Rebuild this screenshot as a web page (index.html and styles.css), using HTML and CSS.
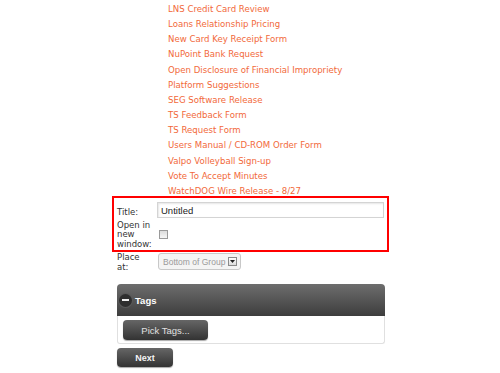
FILE: index.html
```html
<!DOCTYPE html>
<html>
<head>
<meta charset="utf-8">
<link rel="stylesheet" href="styles.css">
</head>
<body>
<div class="page">
  <div class="links">
    <a class="link" href="#">LNS Credit Card Review</a>
    <a class="link" href="#">Loans Relationship Pricing</a>
    <a class="link" href="#">New Card Key Receipt Form</a>
    <a class="link" href="#">NuPoint Bank Request</a>
    <a class="link" href="#">Open Disclosure of Financial Impropriety</a>
    <a class="link" href="#">Platform Suggestions</a>
    <a class="link" href="#">SEG Software Release</a>
    <a class="link" href="#">TS Feedback Form</a>
    <a class="link" href="#">TS Request Form</a>
    <a class="link" href="#">Users Manual / CD-ROM Order Form</a>
    <a class="link" href="#">Valpo Volleyball Sign-up</a>
    <a class="link" href="#">Vote To Accept Minutes</a>
    <a class="link" href="#">WatchDOG Wire Release - 8/27</a>
  </div>
  <div class="highlight">
    <div class="row row-title">
      <label class="lbl">Title:</label>
      <input class="text" type="text" value="Untitled">
    </div>
    <div class="row row-check">
      <label class="lbl">Open in<br>new<br>window:</label>
      <span class="check"></span>
    </div>
  </div>
  <div class="row row-place">
    <label class="lbl">Place<br>at:</label>
    <div class="select"><span class="select-text">Bottom of Group</span><span class="select-btn"><svg width="5" height="3" viewBox="0 0 5 3"><path d="M0 0H5L2.5 3Z" fill="#222"/></svg></span></div>
  </div>
  <div class="panel">
    <div class="panel-head">
      <span class="minus"><span class="bar"></span></span>
      <span class="panel-title">Tags</span>
    </div>
    <div class="panel-body">
      <button class="btn btn-pick">Pick Tags...</button>
    </div>
  </div>
  <button class="btn btn-next">Next</button>
</div>
</body>
</html>
```
FILE: styles.css
```css
html, body {
  margin: 0;
  padding: 0;
  background: #ffffff;
}
.page {
  width: 500px;
  height: 373px;
  overflow: hidden;
  font-family: "DejaVu Sans", Verdana, sans-serif;
}
.links {
  display: flex;
  flex-direction: column;
  padding: 2px 0 0 168px;
}
.link {
  display: block;
  font-size: 8.6px;
  line-height: 15.17px;
  height: 15.17px;
  color: #f2693a;
  text-decoration: none;
  white-space: nowrap;
}
.highlight {
  margin: -3px 0 0 112px;
  height: 52px;
  border: 2px solid #ff0000;
  padding: 0 0 0 3px;
  box-sizing: content-box;
  width: 270px;
}
.row {
  display: grid;
  grid-template-columns: 40px 1fr;
  align-items: end;
}
.lbl {
  font-size: 8.5px;
  line-height: 9.5px;
  color: #333333;
}
.row-title {
  padding-top: 2px;
  height: 18px;
}
.row-title .lbl {
  padding-bottom: 1px;
}
.text {
  width: 227px;
  height: 16px;
  box-sizing: border-box;
  border: 1px solid #d4d4d4;
  box-shadow: inset 1px 1px 2px #e6e6e6;
  font-family: "Liberation Sans", Arial, sans-serif;
  font-size: 9.5px;
  color: #222222;
  padding: 0 0 0 3px;
  margin: 0;
  outline: none;
}
.row-check {
  height: 32px;
  align-items: center;
}
.row-check .lbl {
  padding-top: 2px;
}
.check {
  display: block;
  width: 9px;
  height: 9px;
  margin-left: 2px;
  margin-top: 1px;
  box-sizing: border-box;
  border: 1px solid #9a9a9a;
  background: linear-gradient(#dcdcdc, #f6f6f6);
}
.row-place {
  margin-left: 117px;
  height: 21px;
  align-items: start;
}
.row-place .lbl {
  padding-top: 1px;
}
.select {
  margin-left: 1px;
  margin-top: 1px;
  width: 83px;
  height: 17px;
  box-sizing: border-box;
  border: 1px solid #c8c8c8;
  border-radius: 3px;
  background: #f4f4f4;
  display: flex;
  align-items: center;
  justify-content: space-between;
  padding: 0 3px 0 4px;
}
.select-text {
  font-family: "Liberation Sans", Arial, sans-serif;
  font-size: 8.5px;
  color: #9a9a9a;
  white-space: nowrap;
}
.select-btn {
  width: 9px;
  height: 9px;
  box-sizing: border-box;
  border: 1px solid #8a8a8a;
  background: linear-gradient(#ffffff, #dcdcdc);
  display: flex;
  align-items: center;
  justify-content: center;
}
.panel {
  margin: 11px 0 0 117px;
  width: 268px;
}
.panel-head {
  height: 32px;
  border-radius: 4px 4px 0 0;
  background: linear-gradient(#6d6d6d, #3d3d3d);
  display: flex;
  align-items: center;
  padding-left: 2px;
  gap: 3px;
}
.minus {
  width: 13px;
  height: 13px;
  border-radius: 50%;
  background: #2e2e2e;
  box-shadow: 0 0 0 1px #5a5a5a;
  display: flex;
  align-items: center;
  justify-content: center;
}
.bar {
  width: 7px;
  height: 2px;
  background: #f0f0f0;
}
.panel-title {
  font-family: "Liberation Sans", Arial, sans-serif;
  font-size: 9.5px;
  font-weight: bold;
  color: #ffffff;
}
.panel-body {
  height: 28px;
  box-sizing: border-box;
  border: 1px solid #e0e0e0;
  border-top: none;
  border-radius: 0 0 3px 3px;
  padding: 4px 0 0 5px;
}
.btn {
  display: block;
  border: none;
  border-radius: 4px;
  background: linear-gradient(#666666, #333333);
  color: #e0e0e0;
  font-family: "Liberation Sans", Arial, sans-serif;
  padding: 0;
  margin: 0;
  box-shadow: 0 1px 1px #aaaaaa;
}
.btn-pick {
  width: 85px;
  height: 20px;
  font-size: 9.5px;
}
.btn-next {
  margin: 4px 0 0 117px;
  width: 56px;
  height: 19px;
  font-size: 9px;
  font-weight: bold;
  color: #f4f4f4;
}
```
